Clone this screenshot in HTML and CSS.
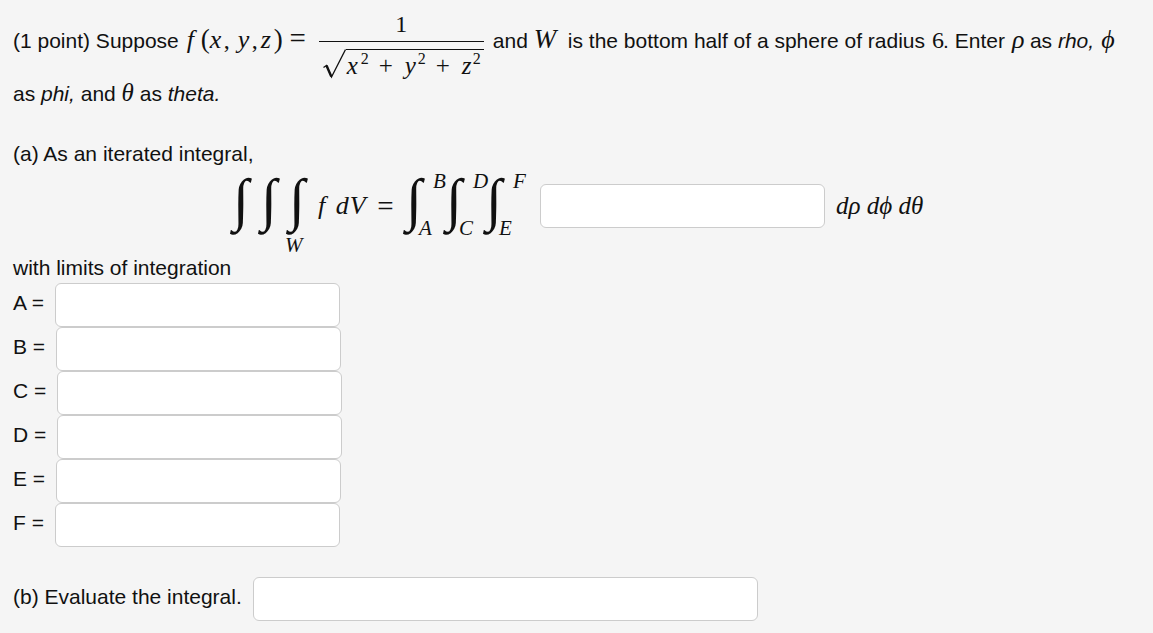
FILE: index.html
```html
<!DOCTYPE html>
<html lang="en">
<head>
    <meta charset="UTF-8">
    <meta name="viewport" content="width=device-width, initial-scale=1.0">
    <title>Problem</title>
    <link rel="stylesheet" href="styles.css">
</head>
<body>
    <div class="line first">
        <span>(1 point) Suppose</span>
        <span class="math cell-f">f</span>
        <span class="num paren">(</span>
        <span class="math cell-x">x</span>
        <span class="num cell-x">,</span>
        <span class="math cell-x">y</span>
        <span class="num cell-comma">,</span>
        <span class="math cell-z">z</span>
        <span class="num paren">)</span>
        <span class="num eq">=</span>
        <span class="frac">
            <span class="frac-top num">1</span>
            <span class="frac-bottom">
                <svg class="radical" width="23" height="31" viewBox="0 0 23 31">
                    <path d="M0.5 18.5 L3.5 16.5 L8.5 28 L22.5 0.5" fill="none" stroke="#111" stroke-width="1.3"/>
                    <path d="M3.5 16.5 L8.3 27.5" fill="none" stroke="#111" stroke-width="2.4"/>
                </svg>
                <span class="radicand">
                    <span class="math r-x">x</span><span class="num sq">2</span><span class="num op">+</span><span class="math r-y">y</span><span class="num sq">2</span><span class="num op">+</span><span class="math r-z">z</span><span class="num sq">2</span>
                </span>
            </span>
        </span>
        <span>and</span>
        <span class="math cell-w">W</span>
        <span>is the bottom half of a sphere of radius</span>
        <span class="num six">6</span>
        <span>. Enter</span>
        <span class="math cell-rho">ρ</span>
        <span>as <em>rho,</em></span>
        <span class="math cell-phi">ϕ</span>
    </div>

    <div class="line second">
        as <em>phi,</em> and <span class="math">θ</span> as <em>theta.</em>
    </div>

    <div class="line part-a">(a) As an iterated integral,</div>

    <div class="display">
        <span class="triple">
            <span class="int">∫</span>
            <span class="int">∫</span>
            <span class="int">∫</span>
            <span class="under math">W</span>
        </span>
        <span class="math dv">f dV</span>
        <span class="num eq dv-eq">=</span>
        <span class="limit"><span class="int">∫</span><sup class="math">B</sup><sub class="math">A</sub></span>
        <span class="limit"><span class="int">∫</span><sup class="math">D</sup><sub class="math">C</sub></span>
        <span class="limit last"><span class="int">∫</span><sup class="math">F</sup><sub class="math">E</sub></span>
        <input type="text" class="answer wide">
        <span class="math diff">dρ dϕ dθ</span>
    </div>

    <div class="line limits-title">with limits of integration</div>

    <div class="row"><span>A =</span><input type="text" class="answer"></div>
    <div class="row"><span>B =</span><input type="text" class="answer"></div>
    <div class="row"><span>C =</span><input type="text" class="answer"></div>
    <div class="row"><span>D =</span><input type="text" class="answer"></div>
    <div class="row"><span>E =</span><input type="text" class="answer"></div>
    <div class="row"><span>F =</span><input type="text" class="answer"></div>

    <div class="row part-b"><span>(b) Evaluate the integral.</span><input type="text" class="answer result"></div>
</body>
</html>
```

FILE: styles.css
```css
html, body {
    height: 100%;
}
body {
    margin: 0;
    padding: 0 13px;
    overflow: hidden;
    box-sizing: border-box;
    background-color: #f5f5f5;
    color: #111;
    font-family: "Liberation Sans", Arial, sans-serif;
    font-size: 21px;
}
.line {
    white-space: nowrap;
    line-height: 24px;
}
.math {
    font-family: "Liberation Serif", "Times New Roman", serif;
    font-style: italic;
    font-size: 25px;
}
.num {
    font-family: "Liberation Serif", "Times New Roman", serif;
    font-size: 24px;
}

/* first line, formula glyphs sit in fixed cells */
.first {
    display: flex;
    align-items: baseline;
    box-sizing: border-box;
    height: 81px;
    padding-top: 26px;
}
.first > span {
    display: inline-block;
    flex: none;
}
.first > .math {
    font-size: 26px;
}
.cell-f {
    width: 14px;
    margin-left: 8px;
}
.paren {
    width: 9px;
    font-size: 27px;
}
.cell-x {
    width: 14px;
}
.cell-comma {
    width: 9px;
}
.cell-z {
    width: 13px;
}
.eq {
    width: 18px;
    margin-left: 6px;
    font-size: 29px;
    text-align: center;
}
.first > .frac {
    display: inline-flex;
    flex-direction: column;
    align-self: flex-start;
    width: 165px;
    margin: -26px 9px 0 12px;
}
.frac-top {
    box-sizing: border-box;
    height: 42px;
    line-height: 48px;
    text-align: center;
    border-bottom: 1.5px solid #111;
}
.frac-bottom {
    display: flex;
    align-items: flex-start;
    padding: 7px 0 0 4px;
}
.radical {
    flex: none;
}
.radicand {
    box-sizing: border-box;
    width: 139px;
    height: 30px;
    line-height: 32px;
    border-top: 1px solid #111;
    white-space: nowrap;
}
.radicand span {
    display: inline-block;
}
.r-x {
    width: 14px;
    margin-left: 1px;
}
.r-y {
    width: 13px;
}
.r-z {
    width: 11px;
}
.sq {
    width: 9px;
    font-size: 16px;
    vertical-align: 10px;
    line-height: 0;
}
.op {
    width: 14px;
    margin: 0 12px 0 9px;
    font-size: 25px;
}
.first > .cell-w {
    width: 24px;
    margin: 0 10px 0 6px;
    font-size: 27px;
}
.six {
    width: 11px;
    margin-left: 7px;
}
.cell-rho {
    width: 13px;
    margin: 0 5px 0 7px;
}
.cell-phi {
    margin-left: 7px;
}

.part-a {
    margin-top: 36px;
}

.display {
    display: flex;
    align-items: center;
    height: 80px;
    padding-left: 219px;
}
.triple {
    position: relative;
    display: inline-flex;
    gap: 6px;
    margin: -12px 0 0 1px;
}
.int {
    display: inline-block;
    width: 22px;
    font-family: "Liberation Serif", "Times New Roman", serif;
    font-style: italic;
    font-size: 58px;
    line-height: 60px;
}
.under {
    position: absolute;
    left: 52px;
    top: 63px;
    font-size: 21px;
}
.dv {
    width: 50px;
    margin-left: 7px;
    font-size: 26px;
    letter-spacing: 1px;
    word-spacing: 2px;
    white-space: nowrap;
}
.dv-eq {
    width: 17px;
    margin: 0 6px 0 9px;
}
.limit {
    position: relative;
    display: inline-block;
    width: 40px;
    height: 60px;
}
.limit.last {
    width: 52px;
}
.limit .int {
    display: block;
    height: 52px;
    margin: -6px 0 0 6px;
}
.limit sup, .limit sub {
    position: absolute;
    font-size: 21px;
    line-height: 20px;
}
.limit sup {
    left: 33px;
    top: -5px;
}
.limit sub {
    left: 19px;
    top: 42px;
}
.answer {
    box-sizing: border-box;
    height: 44px;
    width: 285px;
    margin: 0;
    padding: 0 10px;
    background: #fff;
    border: 1px solid #ccc;
    border-radius: 6px;
}
.wide {
    margin-left: 8px;
}
.diff {
    margin-left: 11px;
}
.limits-title {
    margin-top: 10px;
    margin-bottom: 3px;
}
.row {
    display: flex;
    align-items: center;
    gap: 11px;
    height: 44px;
}
.row span {
    margin-bottom: 4px;
}
.part-b {
    margin-top: 30px;
}
.result {
    width: 505px;
}
```
